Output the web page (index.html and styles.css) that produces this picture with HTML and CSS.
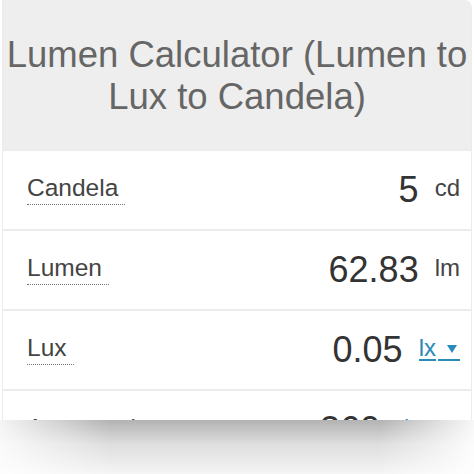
FILE: index.html
```html
<!DOCTYPE html>
<html lang="en">
<head>
  <meta charset="UTF-8" />
  <meta name="viewport" content="width=device-width, initial-scale=1.0" />
  <title>Lumen Calculator</title>
  <link rel="stylesheet" href="styles.css">
</head>
<body>
  <div class="calc">
    <div class="calc-head">
      <h1>Lumen Calculator (Lumen to Lux to Candela)</h1>
    </div>

    <div class="row">
      <span class="label">Candela</span>
      <span class="value">5</span>
      <span class="unit">cd</span>
    </div>

    <div class="row">
      <span class="label">Lumen</span>
      <span class="value">62.83</span>
      <span class="unit">lm</span>
    </div>

    <div class="row">
      <span class="label">Lux</span>
      <span class="value">0.05</span>
      <span class="unit-select">
        <span class="sel">lx</span>
        <span class="caret"><svg width="10" height="8" viewBox="0 0 10 8"><path d="M0 0h10L5 8z" fill="currentColor"/></svg></span>
      </span>
    </div>

    <div class="row">
      <span class="label">Apex angle</span>
      <span class="value">360</span>
      <span class="unit-select">
        <span class="sel">deg</span>
        <span class="caret"><svg width="10" height="8" viewBox="0 0 10 8"><path d="M0 0h10L5 8z" fill="currentColor"/></svg></span>
      </span>
    </div>
  </div>
  <div class="shade"></div>
</body>
</html>
```

FILE: styles.css
```css
body { margin: 0; background: #fff; font-family: "Liberation Sans", Arial, sans-serif; }

.calc { margin-left: 2px; width: 470px; height: 420px; box-sizing: border-box; padding: 0 1px; overflow: hidden; background: #ececec; border-radius: 0 8px 0 0; display: flex; flex-direction: column; gap: 2px; }
.calc-head { flex: none; height: 149px; box-sizing: border-box; padding-top: 34px; background: #eee; }
.calc-head h1 { margin: 0; font-size: 36.5px; line-height: 42px; font-weight: normal; color: #666; text-align: center; }

.row { flex: none; height: 78px; background: #fff; display: flex; align-items: flex-start; padding: 0 11px 0 24px; }
.label { margin-top: 23px; padding: 0 7px 2px 0; font-size: 24.5px; line-height: 28px; color: #444; border-bottom: 1px dotted #777; }
.value { margin: 19px 0 0 auto; font-size: 36px; line-height: 40px; color: #333; }
.unit { margin: 23px 0 0 16px; font-size: 24px; line-height: 28px; color: #444; }

.unit-select { margin: 26px 0 0 16px; display: flex; color: #2a8ab9; font-size: 24px; line-height: 22px; }
.unit-select .sel { border-bottom: 2px solid currentColor; }
.caret { width: 19px; margin-left: 2px; padding: 0 3px 6px 0; border-bottom: 2px solid currentColor; display: flex; justify-content: flex-end; align-items: flex-end; }

.shade { height: 54px; background: linear-gradient(rgba(0,0,0,0.3), rgba(0,0,0,0.13) 45%, rgba(0,0,0,0.04)); -webkit-mask-image: linear-gradient(90deg, rgba(0,0,0,0.15), #000 110px, #000 380px, rgba(0,0,0,0.1)); mask-image: linear-gradient(90deg, rgba(0,0,0,0.15), #000 110px, #000 380px, rgba(0,0,0,0.1)); }
```
